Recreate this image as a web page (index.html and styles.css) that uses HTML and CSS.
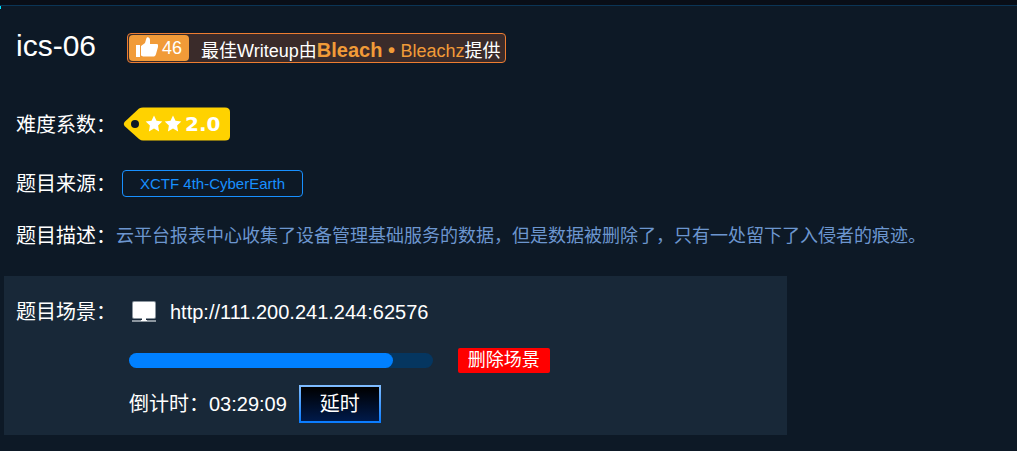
FILE: index.html
```
<!DOCTYPE html>
<html lang="zh-CN">
<head>
    <meta charset="utf-8">
    <title>ics-06</title>
    <link rel="stylesheet" href="styles.css">
</head>
<body>
    <main class="challenge">
        <header class="heading">
            <h1>ics-06</h1>
            <div class="writeup">
                <button class="like" type="button">
                    <svg width="22" height="22" viewBox="0 0 22 22" aria-hidden="true">
                        <path d="M0 8h4v12H0zM5 9l4-3 1.500-5c.3-1.300 3.500-1.300 3.500 2V7h6.500c2 0 2 1.500 1.500 3L20 17c-.5 2-1.500 2.500-3 2.500H7l-2-1z" fill="#fff"/>
                    </svg>
                    46
                </button>
                <p>最佳Writeup由<a class="author" href="#"><strong>Bleach • </strong>Bleachz</a>提供</p>
            </div>
        </header>

        <div class="row difficulty">
            <span class="label">难度系数：</span>
            <svg class="tag" width="108" height="34" viewBox="0 0 108 34" role="img" aria-label="2.0">
                <path d="M16 1.500Q18 .5 20 .5H102Q107 .5 107 5V29Q107 33.500 102 33.500H20Q18 33.500 16 32L1.500 19Q0 17 1.500 15Z" fill="#ffd200"/>
                <circle cx="12" cy="17" r="4" fill="#0d1926"/>
                <path id="star" d="M31 8.500l2.500 5.300 5.800.8-4.200 4 1 5.800-5.100-2.800-5.100 2.800 1-5.800-4.200-4 5.800-.8z" fill="#fff"/>
                <use href="#star" x="19"/>
                <text class="score" x="62" y="24">2.0</text>
            </svg>
        </div>

        <div class="row source">
            <span class="label">题目来源：</span>
            <a class="origin" href="#">XCTF 4th-CyberEarth</a>
        </div>

        <div class="row description">
            <span class="label">题目描述：</span>
            <p>云平台报表中心收集了设备管理基础服务的数据，但是数据被删除了，只有一处留下了入侵者的痕迹。</p>
        </div>

        <section class="scene">
            <span class="label">题目场景：</span>
            <div class="scene-body">
                <div class="address">
                    <svg width="26" height="22" viewBox="0 0 26 22" aria-hidden="true">
                        <rect x="1" y="0" width="24" height="18" rx="2" fill="#8c969f"/>
                        <rect x="2" y="1" width="22" height="16" rx="1" fill="#fff"/>
                        <path d="M11 17h4v3h-4z" fill="#fff"/>
                        <path d="M1 19h24v2H1z" fill="#8c969f"/>
                        <path d="M10 19h6v1h-6z" fill="#fff"/>
                    </svg>
                    <a href="http://111.200.241.244:62576">http://111.200.241.244:62576</a>
                </div>
                <div class="usage">
                    <div class="bar" role="progressbar" aria-label="倒计时" aria-valuenow="87" aria-valuemin="0" aria-valuemax="100">
                        <div class="bar-fill" style="width: 87%"></div>
                    </div>
                    <button class="delete" type="button">删除场景</button>
                </div>
                <div class="countdown">
                    <span>倒计时：03:29:09</span>
                    <button class="extend" type="button">延时</button>
                </div>
            </div>
        </section>
    </main>
</body>
</html>
```
FILE: styles.css
```
* {
    box-sizing: border-box;
}
body {
    margin: 0;
    padding-top: 5px;
    background-color: #090e17;
    color: #fff;
    font-family: "Liberation Sans", "Noto Sans CJK SC", sans-serif;
    font-size: 20px;
    line-height: 28px;
}
h1, p {
    margin: 0;
    font-weight: normal;
}
a {
    color: inherit;
    text-decoration: none;
}
button {
    padding: 0;
    border: 0;
    color: #fff;
    font-family: inherit;
    cursor: pointer;
}
svg {
    flex: none;
}
.challenge {
    position: relative;
    padding-bottom: 16px;
    border-top: 1px solid #0b3556;
    background-color: #0d1926;
}
/* bright corner mark on the panel border */
.challenge::before {
    content: "";
    position: absolute;
    top: 0;
    left: 0;
    width: 1px;
    height: 3px;
    background-color: #00e5ff;
}
.heading {
    display: flex;
    align-items: center;
    gap: 31px;
    padding: 22px 16px 0;
}
h1 {
    font-size: 30px;
    line-height: 36px;
}
.writeup {
    display: flex;
    align-items: center;
    gap: 12px;
    height: 30px;
    margin-top: 4px;
    padding: 0 4px 0 1px;
    border: 1px solid #ed7d31;
    border-radius: 4px;
    background-color: #3a2b2a;
    font-size: 18px;
}
.writeup p {
    padding-top: 4px;
    white-space: nowrap;
}
.author {
    color: #f19b38;
}
.author strong {
    font-size: 20px;
}
.like {
    display: flex;
    align-items: center;
    gap: 4px;
    height: 26px;
    padding: 0 7px;
    border-radius: 4px;
    background-color: #f19b38;
    font-size: 18px;
}
.row {
    display: flex;
    align-items: center;
    padding: 0 16px;
}
.label {
    flex: none;
    width: 100px;
}
.difficulty .label,
.source .label {
    padding-top: 2px;
}
.difficulty {
    gap: 7px;
    margin-top: 43px;
}
.score {
    fill: #fff;
    font-family: "DejaVu Sans", sans-serif;
    font-size: 20px;
    font-weight: bold;
}
.source {
    gap: 6px;
    margin-top: 27px;
}
.origin {
    padding: 0 17px;
    border: 1px solid #1890ff;
    border-radius: 4px;
    color: #1890ff;
    font-size: 15px;
    line-height: 25px;
}
.description {
    margin-top: 24px;
}
.description p {
    color: #6c96cf;
    font-size: 18px;
}
.scene {
    display: flex;
    width: 77%;
    margin: 26px 0 0 4px;
    padding: 22px 12px 12px;
    background-color: #182838;
}
.scene-body {
    flex: 1;
    padding-left: 13px;
}
.address {
    display: flex;
    align-items: center;
    gap: 13px;
    padding-left: 2px;
}
.usage {
    display: flex;
    align-items: center;
    gap: 25px;
    margin-top: 22px;
}
.bar {
    width: 47%;
    height: 15px;
    border-radius: 8px;
    background-color: #053660;
}
.bar-fill {
    height: 100%;
    border-radius: 8px;
    background-color: #0080ff;
}
.delete {
    padding: 0 10px;
    border-radius: 2px;
    background-color: #f00;
    font-size: 18px;
    line-height: 25px;
}
.countdown {
    display: flex;
    align-items: center;
    gap: 12px;
    margin-top: 12px;
}
.extend {
    padding: 0 19px;
    border: 2px solid;
    border-image: linear-gradient(#7fbcff, #0a7cff) 1;
    background: linear-gradient(#000, #001a4a);
    font-size: 20px;
    line-height: 34px;
}
```
